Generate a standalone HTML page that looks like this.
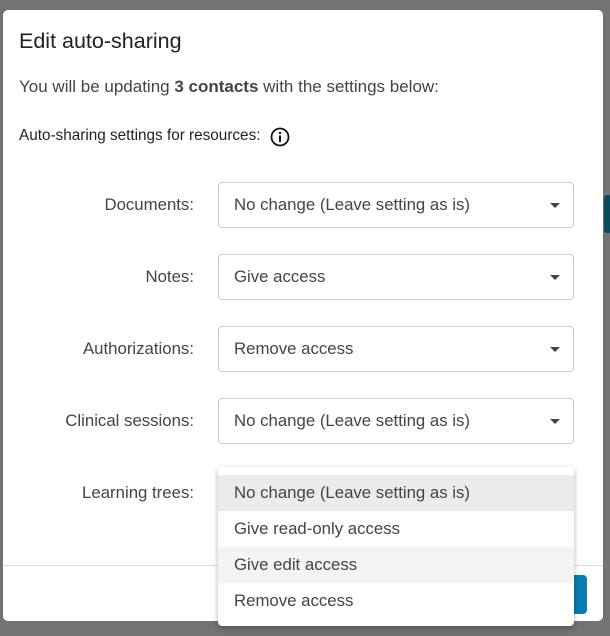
<!DOCTYPE html>
<html><head><style>
*{box-sizing:border-box;margin:0;padding:0}
body{width:610px;height:636px;background:#737373;font-family:"Liberation Sans",sans-serif;position:relative;overflow:hidden;color:#333}
.modal{position:absolute;left:3px;top:10px;width:600px;height:611px;background:#fff;border-radius:5px}
.abs{position:absolute;white-space:nowrap}
h1{position:absolute;left:16px;top:19px;font-size:21.5px;font-weight:normal;color:#222;white-space:nowrap}
.lbl{position:absolute;right:409px;font-size:16.8px;color:#444;text-align:right;white-space:nowrap}
.sel{position:absolute;left:215px;width:356px;height:46px;border:1px solid #ccc;border-radius:4px;font-size:16.8px;color:#444;padding:12px 15px;white-space:nowrap}
.sel:after{content:"";position:absolute;right:13px;top:20px;border-left:5px solid transparent;border-right:5px solid transparent;border-top:5px solid #444}
.dd{position:absolute;left:218px;top:467px;width:356px;height:159px;background:#fff;border-radius:4px;box-shadow:0 2px 6px rgba(0,0,0,.3);padding-top:8px}
.opt{height:36px;font-size:16.8px;color:#444;padding:8px 16px;white-space:nowrap}
</style></head><body>
<div class="abs" style="left:604px;top:195px;width:8px;height:38px;background:#0a4a5e;border-radius:3px"></div>
<div class="modal">
<h1>Edit auto-sharing</h1>
<div class="abs" style="left:16px;top:67px;font-size:17px;color:#444">You will be updating <b>3 contacts</b> with the settings below:</div>
<div class="abs" style="left:16px;top:117px;font-size:15.3px;color:#222">Auto-sharing settings for resources:</div>
<svg class="abs" style="left:267px;top:117px" width="20" height="20" viewBox="0 0 20 20"><circle cx="10" cy="10" r="8.5" fill="none" stroke="#111" stroke-width="1.8"/><circle cx="10" cy="6" r="1.2" fill="#111"/><rect x="9" y="8.5" width="2" height="6.5" fill="#111"/></svg>
<div class="lbl" style="top:185px">Documents:</div>
<div class="sel" style="top:172px">No change (Leave setting as is)</div>
<div class="lbl" style="top:257px">Notes:</div>
<div class="sel" style="top:244px">Give access</div>
<div class="lbl" style="top:329px">Authorizations:</div>
<div class="sel" style="top:316px">Remove access</div>
<div class="lbl" style="top:401px">Clinical sessions:</div>
<div class="sel" style="top:388px">No change (Leave setting as is)</div>
<div class="lbl" style="top:473px">Learning trees:</div>
<div class="abs" style="left:0;top:555px;width:600px;height:1px;background:#ddd"></div>
<div class="abs" style="left:540px;top:565px;width:44px;height:39px;background:#0a7cb0;border-radius:4px"></div>
</div>
<div class="dd">
<div class="opt" style="background:#ebebeb">No change (Leave setting as is)</div>
<div class="opt">Give read-only access</div>
<div class="opt" style="background:#f3f3f3">Give edit access</div>
<div class="opt">Remove access</div>
</div>
</body></html>
